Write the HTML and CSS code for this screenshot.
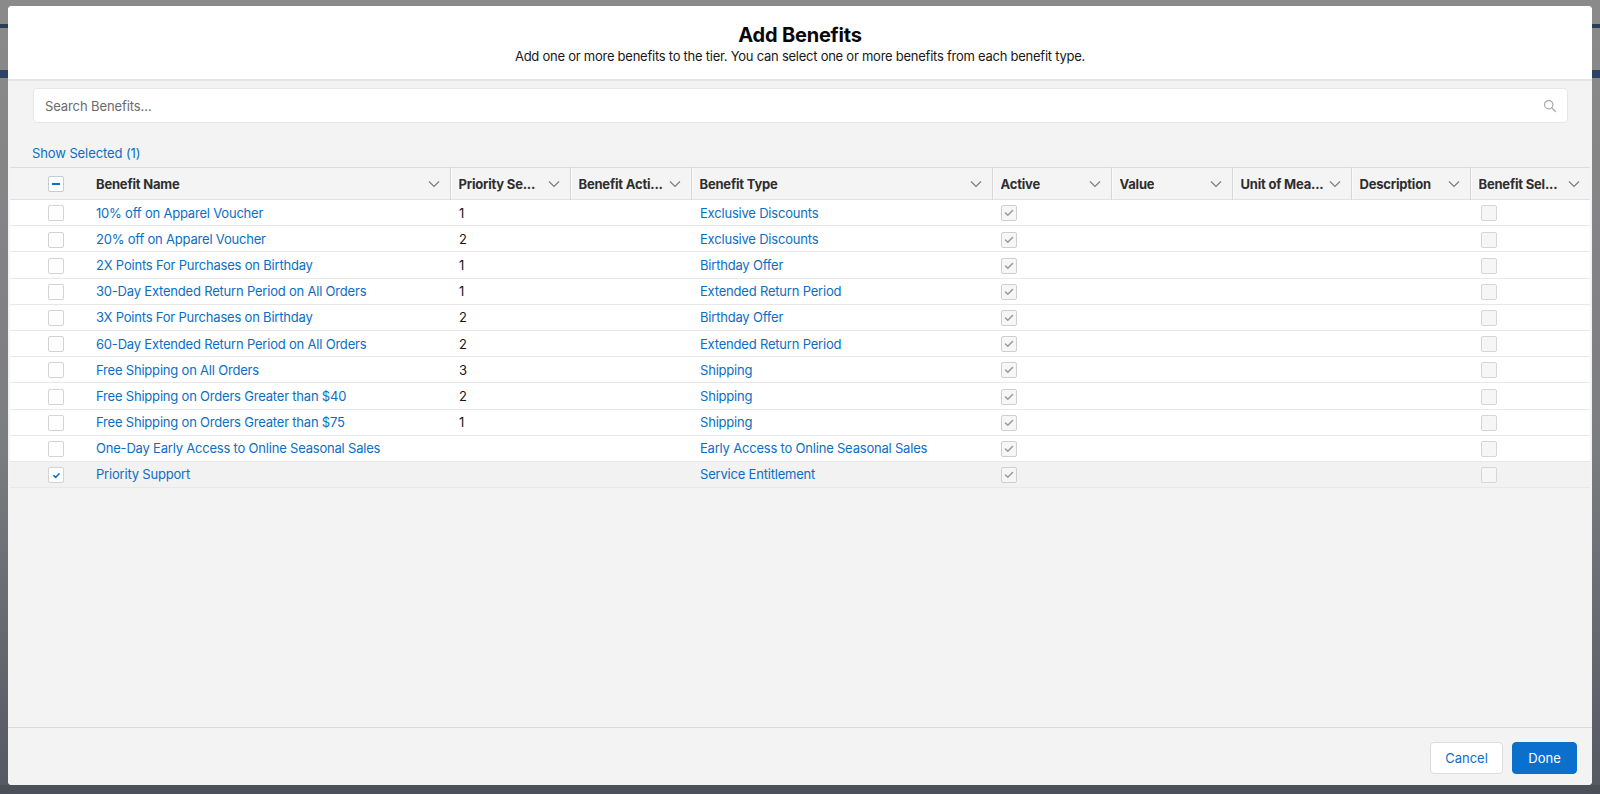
FILE: index.html
```html
<!DOCTYPE html>
<html lang="en">
<head>
<meta charset="utf-8">
<title>Add Benefits</title>
<link rel="stylesheet" href="styles.css">
</head>
<body>
<div class="backdrop" aria-hidden="true">
  <div class="bd-nav"></div>
  <div class="bd-nav2"></div>
  <div class="bd-foot"></div>
</div>
<div class="modal">
  <header class="modal-header">
    <h2 class="modal-title">Add Benefits</h2>
    <p class="modal-sub">Add one or more benefits to the tier. You can select one or more benefits from each benefit type.</p>
  </header>
  <div class="modal-body">
    <div class="search">
      <span class="search-ph">Search Benefits...</span>
      <svg class="search-icon" viewBox="0 0 16 16" width="14" height="14"><circle cx="6.5" cy="6.5" r="4.8" fill="none" stroke="#aeaeae" stroke-width="1.5"/><path d="M10 10l4.2 4.2" stroke="#aeaeae" stroke-width="1.6" stroke-linecap="round"/></svg>
    </div>
    <a class="show-selected" href="#">Show Selected (1)</a>
    <table class="grid">
      <colgroup>
        <col class="c-cb"><col class="c-name"><col class="c-120"><col class="c-121"><col class="c-type"><col class="c-119"><col class="c-121"><col class="c-119"><col class="c-119"><col class="c-120">
      </colgroup>
      <thead>
        <tr>
          <th class="th-cb"><span class="cb cb-ind"><span class="dash"></span></span></th>
          <th class="th-first"><div class="th-in"><span class="th-label">Benefit Name</span><svg class="chev" viewBox="0 0 12 8"><path d="M1 1.5l5 5 5-5"/></svg></div></th>
          <th><div class="th-in"><span class="th-label">Priority Se...</span><svg class="chev" viewBox="0 0 12 8"><path d="M1 1.5l5 5 5-5"/></svg></div></th>
          <th><div class="th-in"><span class="th-label">Benefit Acti...</span><svg class="chev" viewBox="0 0 12 8"><path d="M1 1.5l5 5 5-5"/></svg></div></th>
          <th><div class="th-in"><span class="th-label">Benefit Type</span><svg class="chev" viewBox="0 0 12 8"><path d="M1 1.5l5 5 5-5"/></svg></div></th>
          <th><div class="th-in"><span class="th-label">Active</span><svg class="chev" viewBox="0 0 12 8"><path d="M1 1.5l5 5 5-5"/></svg></div></th>
          <th><div class="th-in"><span class="th-label">Value</span><svg class="chev" viewBox="0 0 12 8"><path d="M1 1.5l5 5 5-5"/></svg></div></th>
          <th><div class="th-in"><span class="th-label">Unit of Mea...</span><svg class="chev" viewBox="0 0 12 8"><path d="M1 1.5l5 5 5-5"/></svg></div></th>
          <th><div class="th-in"><span class="th-label">Description</span><svg class="chev" viewBox="0 0 12 8"><path d="M1 1.5l5 5 5-5"/></svg></div></th>
          <th><div class="th-in"><span class="th-label">Benefit Sel...</span><svg class="chev" viewBox="0 0 12 8"><path d="M1 1.5l5 5 5-5"/></svg></div></th>
        </tr>
      </thead>
      <tbody>
        <tr><td class="td-cb"><span class="cb"></span></td><td><a href="#">10% off on Apparel Voucher</a></td><td>1</td><td></td><td><a href="#">Exclusive Discounts</a></td><td class="td-box"><span class="cb cb-dis-on"><svg viewBox="0 0 10 8"><path d="M1.5 4l2.3 2.3L8.5 1.5"/></svg></span></td><td></td><td></td><td></td><td class="td-last"><span class="cb cb-dis"></span></td></tr>
        <tr><td class="td-cb"><span class="cb"></span></td><td><a href="#">20% off on Apparel Voucher</a></td><td>2</td><td></td><td><a href="#">Exclusive Discounts</a></td><td class="td-box"><span class="cb cb-dis-on"><svg viewBox="0 0 10 8"><path d="M1.5 4l2.3 2.3L8.5 1.5"/></svg></span></td><td></td><td></td><td></td><td class="td-last"><span class="cb cb-dis"></span></td></tr>
        <tr><td class="td-cb"><span class="cb"></span></td><td><a href="#">2X Points For Purchases on Birthday</a></td><td>1</td><td></td><td><a href="#">Birthday Offer</a></td><td class="td-box"><span class="cb cb-dis-on"><svg viewBox="0 0 10 8"><path d="M1.5 4l2.3 2.3L8.5 1.5"/></svg></span></td><td></td><td></td><td></td><td class="td-last"><span class="cb cb-dis"></span></td></tr>
        <tr><td class="td-cb"><span class="cb"></span></td><td><a href="#">30-Day Extended Return Period on All Orders</a></td><td>1</td><td></td><td><a href="#">Extended Return Period</a></td><td class="td-box"><span class="cb cb-dis-on"><svg viewBox="0 0 10 8"><path d="M1.5 4l2.3 2.3L8.5 1.5"/></svg></span></td><td></td><td></td><td></td><td class="td-last"><span class="cb cb-dis"></span></td></tr>
        <tr><td class="td-cb"><span class="cb"></span></td><td><a href="#">3X Points For Purchases on Birthday</a></td><td>2</td><td></td><td><a href="#">Birthday Offer</a></td><td class="td-box"><span class="cb cb-dis-on"><svg viewBox="0 0 10 8"><path d="M1.5 4l2.3 2.3L8.5 1.5"/></svg></span></td><td></td><td></td><td></td><td class="td-last"><span class="cb cb-dis"></span></td></tr>
        <tr><td class="td-cb"><span class="cb"></span></td><td><a href="#">60-Day Extended Return Period on All Orders</a></td><td>2</td><td></td><td><a href="#">Extended Return Period</a></td><td class="td-box"><span class="cb cb-dis-on"><svg viewBox="0 0 10 8"><path d="M1.5 4l2.3 2.3L8.5 1.5"/></svg></span></td><td></td><td></td><td></td><td class="td-last"><span class="cb cb-dis"></span></td></tr>
        <tr><td class="td-cb"><span class="cb"></span></td><td><a href="#">Free Shipping on All Orders</a></td><td>3</td><td></td><td><a href="#">Shipping</a></td><td class="td-box"><span class="cb cb-dis-on"><svg viewBox="0 0 10 8"><path d="M1.5 4l2.3 2.3L8.5 1.5"/></svg></span></td><td></td><td></td><td></td><td class="td-last"><span class="cb cb-dis"></span></td></tr>
        <tr><td class="td-cb"><span class="cb"></span></td><td><a href="#">Free Shipping on Orders Greater than $40</a></td><td>2</td><td></td><td><a href="#">Shipping</a></td><td class="td-box"><span class="cb cb-dis-on"><svg viewBox="0 0 10 8"><path d="M1.5 4l2.3 2.3L8.5 1.5"/></svg></span></td><td></td><td></td><td></td><td class="td-last"><span class="cb cb-dis"></span></td></tr>
        <tr><td class="td-cb"><span class="cb"></span></td><td><a href="#">Free Shipping on Orders Greater than $75</a></td><td>1</td><td></td><td><a href="#">Shipping</a></td><td class="td-box"><span class="cb cb-dis-on"><svg viewBox="0 0 10 8"><path d="M1.5 4l2.3 2.3L8.5 1.5"/></svg></span></td><td></td><td></td><td></td><td class="td-last"><span class="cb cb-dis"></span></td></tr>
        <tr><td class="td-cb"><span class="cb"></span></td><td><a href="#">One-Day Early Access to Online Seasonal Sales</a></td><td></td><td></td><td><a href="#">Early Access to Online Seasonal Sales</a></td><td class="td-box"><span class="cb cb-dis-on"><svg viewBox="0 0 10 8"><path d="M1.5 4l2.3 2.3L8.5 1.5"/></svg></span></td><td></td><td></td><td></td><td class="td-last"><span class="cb cb-dis"></span></td></tr>
        <tr class="selected"><td class="td-cb"><span class="cb cb-on"><svg viewBox="0 0 10 8"><path d="M2 4.2l2 2L8 2"/></svg></span></td><td><a href="#">Priority Support</a></td><td></td><td></td><td><a href="#">Service Entitlement</a></td><td class="td-box"><span class="cb cb-dis-on"><svg viewBox="0 0 10 8"><path d="M1.5 4l2.3 2.3L8.5 1.5"/></svg></span></td><td></td><td></td><td></td><td class="td-last"><span class="cb cb-dis"></span></td></tr>
      </tbody>
    </table>
  </div>
  <footer class="modal-footer">
    <button class="btn btn-neutral" type="button">Cancel</button>
    <button class="btn btn-brand" type="button">Done</button>
  </footer>
</div>
</body>
</html>
```

FILE: styles.css
```css
* { box-sizing: border-box; }

html, body {
  margin: 0;
  height: 794px;
  overflow: hidden;
}

body {
  position: relative;
  background: linear-gradient(to bottom, #8a8a8a 0%, #7c7d80 55%, #545862 100%);
  font-family: Inter, "Noto Sans", "Liberation Sans", sans-serif;
  font-size: 13px;
  color: #181818;
  padding: 6px 8px 9px 8px;
}

/* dimmed page behind the modal */
.backdrop {
  position: absolute;
  inset: 0;
  z-index: 0;
}
.bd-nav {
  position: absolute;
  left: 0; right: 0;
  top: 24px; height: 4px;
  background: #2b3c55;
}
.bd-nav2 {
  position: absolute;
  left: 0; right: 0;
  top: 70px; height: 8px;
  background: #2d4363;
}
.bd-foot {
  position: absolute;
  left: 0; right: 0;
  bottom: 0; height: 9px;
  background: #4b505b;
}

.modal {
  position: relative;
  z-index: 1;
  height: 779px;
  display: flex;
  flex-direction: column;
  background: #f3f3f3;
  border-radius: 4px;
  overflow: hidden;
}

.modal-header {
  flex: 0 0 75px;
  background: #fff;
  border-bottom: 2px solid #e3e3e3;
  text-align: center;
  padding-top: 18px;
}
.modal-title {
  margin: 0;
  font-size: 20px;
  line-height: 23px;
  font-weight: 700;
  color: #080707;
  letter-spacing: -0.2px;
}
.modal-sub {
  margin: 0;
  font-size: 13px;
  line-height: 18px;
  color: #181818;
  letter-spacing: -0.25px;
}

.modal-body {
  flex: 1;
  padding: 7px 2px 0 2px;
  display: flex;
  flex-direction: column;
}

.search {
  margin: 0 22px 0 23px;
  height: 35px;
  background: #fff;
  border: 1px solid #e6e6e6;
  border-radius: 4px;
  display: flex;
  align-items: center;
  justify-content: space-between;
  padding: 0 10px 0 11px;
}
.search-ph {
  color: #6b6b6b;
  font-size: 13px;
  letter-spacing: -0.1px;
}
.search-icon { display: block; }

.show-selected {
  margin: 21px 0 5px 22px;
  line-height: 18px;
  color: #0b6ec5;
  text-decoration: none;
  align-self: flex-start;
  letter-spacing: -0.1px;
}

.grid {
  width: 1580px;
  border-collapse: collapse;
  table-layout: fixed;
}
.c-cb { width: 78px; }
.c-name { width: 362px; }
.c-120 { width: 120px; }
.c-121 { width: 121px; }
.c-119 { width: 119px; }
.c-type { width: 301px; }

.grid thead tr {
  height: 32px;
  background: #f4f4f4;
  border-top: 1px solid #dcdcdc;
  border-bottom: 1px solid #e2e2e2;
}
.grid th {
  padding: 0;
  text-align: left;
  font-weight: 700;
  color: #2e2e2e;
  border-left: 1px solid #d6d6d6;
  box-shadow: inset 1px 0 0 #f9f9f9;
}
.grid th.th-cb,
.grid th.th-first {
  border-left: 0;
  box-shadow: none;
}
.th-cb { text-align: left; }
.th-cb .cb { margin-left: 38px; }
.th-in {
  display: flex;
  align-items: center;
  justify-content: space-between;
  padding: 0 10px 0 8px;
  letter-spacing: -0.2px;
}
.th-first .th-in { padding-left: 8px; }
.th-label {
  white-space: nowrap;
  overflow: hidden;
}
.chev {
  flex: 0 0 auto;
  width: 12px;
  height: 8px;
  fill: none;
  stroke: #7a7a7a;
  stroke-width: 1.1;
}

.grid tbody tr {
  height: 26.2px;
  background: #fff;
  border-bottom: 1px solid #e8e8e8;
}
.grid tbody tr.selected {
  background: #f2f2f2;
}
.grid td {
  padding: 0 0 0 9px;
  white-space: nowrap;
  overflow: hidden;
  letter-spacing: -0.2px;
  color: #181818;
}
.grid td.td-cb { padding-left: 38px; }
.grid td:nth-child(2) { padding-left: 8px; }
.grid td a {
  color: #0b6ec5;
  text-decoration: none;
}
.grid td.td-box { padding-left: 9px; }
.grid td.td-last { padding-left: 11px; }

.cb {
  display: inline-flex;
  align-items: center;
  justify-content: center;
  width: 16px;
  height: 16px;
  border: 1px solid #d3d3d3;
  border-radius: 2px;
  background: #fff;
  vertical-align: middle;
}
.cb svg {
  width: 10px;
  height: 8px;
  fill: none;
  stroke-width: 1.5;
  stroke-linecap: round;
  stroke-linejoin: round;
}
.cb-ind { border-color: #c4cdd8; }
.cb-ind .dash {
  width: 8px;
  height: 2px;
  background: #0b6ec5;
}
.cb-on svg { stroke: #0b6ec5; width: 9px; height: 7px; stroke-width: 1.8; }
.cb-dis-on {
  background: #f6f6f6;
  border-color: #cfcfcf;
}
.cb-dis-on svg { stroke: #9a9a9a; }
.cb-dis {
  background: #f6f6f6;
  border-color: #d6d6d6;
}

.modal-footer {
  flex: 0 0 58px;
  border-top: 1px solid #dadada;
  background: #f3f3f3;
  display: flex;
  justify-content: flex-end;
  align-items: flex-start;
  gap: 9px;
  padding: 14px 15px 0 0;
}
.btn {
  height: 32px;
  border-radius: 4px;
  font-family: inherit;
  font-size: 13px;
  padding: 0;
  cursor: pointer;
}
.btn-neutral {
  width: 73px;
  background: #fff;
  border: 1px solid #dcdcdc;
  color: #0b6ec5;
}
.btn-brand {
  width: 65px;
  background: #0b6fcc;
  border: 1px solid #0b6fcc;
  color: #fff;
}
```
